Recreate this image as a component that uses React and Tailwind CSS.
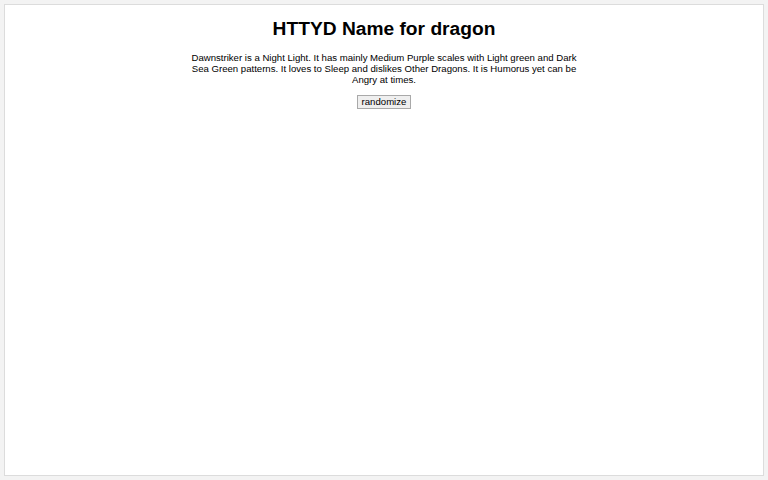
export default function App() {
  return (
    <div className="h-[480px] w-[768px] bg-[#f3f3f3] p-[4px] font-['Liberation_Sans',Arial,sans-serif] text-black">
      <div className="flex h-full flex-col items-center border border-[#dcdcdc] bg-white">
        <h1 className="mt-[13px] text-[19.2px] font-bold leading-[22px]">HTTYD Name for dragon</h1>
        <p className="mt-[12px] w-[390px] text-center text-[9.6px] leading-[11px]">
          Dawnstriker is a Night Light. It has mainly Medium Purple scales with Light green and Dark Sea Green patterns. It loves to Sleep and dislikes Other Dragons. It is Humorus yet can be Angry at times.
        </p>
        <button className="mt-[10px] h-[14px] border border-[#a9a9a9] bg-[#efefef] px-[4px] text-[9.6px] leading-[12px]">
          randomize
        </button>
      </div>
    </div>
  );
}
